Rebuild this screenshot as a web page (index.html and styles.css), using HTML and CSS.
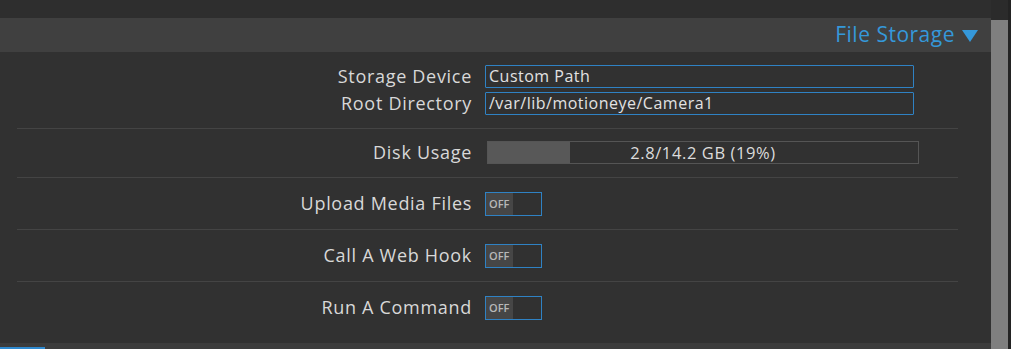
FILE: index.html
```html
<!DOCTYPE html>
<html lang="en">
<head>
    <meta charset="UTF-8">
    <meta name="viewport" content="width=device-width, initial-scale=1.0">
    <title>motionEye - File Storage</title>
    <link rel="stylesheet" href="styles.css">
</head>
<body>
    <div class="page">
        <div class="main">
            <div class="top-gap"></div>

            <!-- Section header -->
            <div class="section-header">
                <span class="section-title">File Storage</span>
                <span class="section-arrow"></span>
            </div>

            <div class="settings">
                <div class="group group-inputs">
                    <div class="row">
                        <span class="label">Storage Device</span>
                        <div class="field">Custom Path</div>
                    </div>
                    <div class="row">
                        <span class="label">Root Directory</span>
                        <div class="field">/var/lib/motioneye/Camera1</div>
                    </div>
                </div>
                <div class="sep"></div>

                <div class="group group-disk">
                    <div class="row">
                        <span class="label">Disk Usage</span>
                        <div class="progress">
                            <div class="progress-fill" style="width: 19%"></div>
                            <span class="progress-text">2.8/14.2 GB (19%)</span>
                        </div>
                    </div>
                </div>
                <div class="sep"></div>

                <div class="group group-toggle">
                    <div class="row">
                        <span class="label">Upload Media Files</span>
                        <div class="toggle"><span class="toggle-off">OFF</span></div>
                    </div>
                </div>
                <div class="sep"></div>

                <div class="group group-toggle">
                    <div class="row">
                        <span class="label">Call A Web Hook</span>
                        <div class="toggle"><span class="toggle-off">OFF</span></div>
                    </div>
                </div>
                <div class="sep"></div>

                <div class="group group-toggle last">
                    <div class="row">
                        <span class="label">Run A Command</span>
                        <div class="toggle"><span class="toggle-off">OFF</span></div>
                    </div>
                </div>
            </div>

            <!-- Next section, cut off at the bottom -->
            <div class="next-header">
                <div class="next-bar"></div>
            </div>
        </div>

        <div class="scrollbar">
            <div class="scroll-thumb"></div>
        </div>
    </div>
</body>
</html>
```

FILE: styles.css
```css
/* General */
body {
    margin: 0;
    padding: 0;
    background-color: #313131;
    font-family: 'Open Sans', 'Noto Sans', sans-serif;
    color: #dcdcdc;
    overflow: hidden;
}

.page {
    display: flex;
    height: 349px;
}

.main {
    flex: 1;
    display: flex;
    flex-direction: column;
    background-color: #313131;
}

.top-gap {
    height: 18px;
    background-color: #2e2e2e;
}

/* Section header */
.section-header {
    height: 34px;
    background-color: #404040;
    display: flex;
    align-items: center;
    justify-content: flex-end;
    padding-right: 13px;
}

.section-title {
    font-size: 21px;
    color: #3598da;
    letter-spacing: 0.5px;
    margin-top: -2px;
}

.section-arrow {
    width: 0;
    height: 0;
    border-left: 8px solid transparent;
    border-right: 8px solid transparent;
    border-top: 12px solid #3598da;
    margin-left: 7px;
    margin-top: 1px;
}

/* Settings rows */
.settings {
    display: flex;
    flex-direction: column;
}

.group {
    display: flex;
    flex-direction: column;
}

.group-inputs {
    padding: 13px 0 13px;
    gap: 4px;
}

.group-disk {
    padding: 12px 0 13px;
}

.group-toggle {
    height: 51px;
    justify-content: center;
}

.group-toggle.last {
    height: 51px;
    margin-bottom: 10px;
}

.row {
    display: flex;
    align-items: center;
    gap: 14px;
    height: 23px;
}

.label {
    width: 472px;
    margin-right: -1px;
    margin-top: -2px;
    text-align: right;
    font-size: 18px;
    letter-spacing: 0.7px;
    color: #d8d8d8;
    white-space: nowrap;
}

.sep {
    height: 1px;
    background-color: #444444;
    margin: 0 33px 0 17px;
}

/* Text fields */
.field {
    box-sizing: border-box;
    width: 429px;
    height: 23px;
    border: 1px solid #2f82c4;
    border-radius: 1px;
    padding: 0 3px;
    font-size: 16px;
    letter-spacing: 0.5px;
    line-height: 21px;
    color: #e2e2e2;
    background-color: #313131;
}

/* Disk usage bar */
.progress {
    position: relative;
    box-sizing: border-box;
    width: 432px;
    height: 23px;
    margin-left: 2px;
    border: 1px solid #555555;
    display: flex;
    align-items: center;
    justify-content: center;
}

.progress-fill {
    position: absolute;
    left: 0;
    top: 0;
    bottom: 0;
    background-color: #585858;
}

.progress-text {
    position: relative;
    font-size: 16.5px;
    letter-spacing: 0.6px;
    color: #dcdcdc;
}

/* On/off switch */
.toggle {
    box-sizing: border-box;
    width: 57px;
    height: 24px;
    border: 1px solid #2f82c4;
    display: flex;
}

.toggle-off {
    width: 27px;
    background-color: #464646;
    font-size: 11px;
    font-weight: 600;
    color: #b8b8b8;
    line-height: 22px;
    padding-left: 3px;
    box-sizing: border-box;
}

/* Next section header */
.next-header {
    flex: 1;
    background-color: #3c3c3c;
    display: flex;
    align-items: flex-end;
}

.next-bar {
    width: 45px;
    height: 2px;
    background-color: #2f8ad0;
}

/* Scrollbar */
.scrollbar {
    width: 17px;
    background-color: #2b2b2b;
    border-right: 3px solid #232323;
    display: flex;
    flex-direction: column;
}

.scroll-thumb {
    flex: 1;
    margin-top: 20px;
    background-color: #7f7f7f;
}
```
